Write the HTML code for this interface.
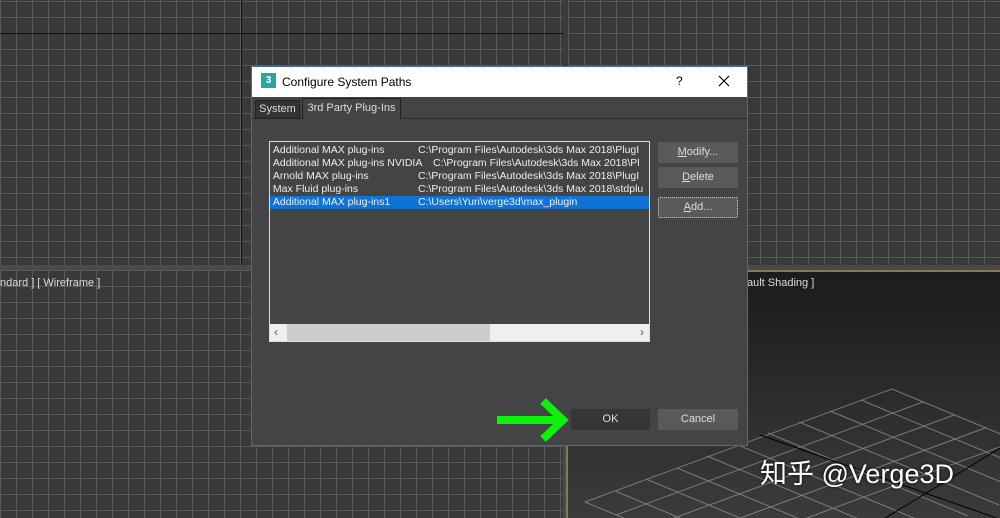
<!DOCTYPE html>
<html><head><meta charset="utf-8"><style>
*{margin:0;padding:0;box-sizing:border-box}
html,body{width:1000px;height:518px;overflow:hidden}
body{background:#3a3a3a;font-family:"Liberation Sans",sans-serif;position:relative}
.grid{position:absolute;background-color:#393939;background-image:linear-gradient(#5a5a5a 1px,transparent 1px),linear-gradient(90deg,#5a5a5a 1px,transparent 1px);background-size:16px 16px}
.abs{position:absolute}
.dlg{position:absolute;left:251px;top:66px;width:497px;height:380px;background:#444;border:1px solid #3f6e9e}
.title{position:absolute;left:0;top:0;right:0;height:30px;background:#fff;color:#000;font-size:12px}
.btn{position:absolute;background:#5a5a5a;color:#ddd;font-size:11px;text-align:center;line-height:21px;height:21px;border-radius:2px}
.row{height:13px;line-height:13px;font-size:10.5px;color:#eee;white-space:nowrap;position:relative}
.row span{position:absolute;left:148px}
</style></head><body>
<div class="grid" style="left:0;top:0;width:563px;height:265px;background-position:0 1px"></div>
<div class="grid" style="left:568px;top:0;width:432px;height:265px;background-position:0 1px"></div>
<div class="abs" style="left:0;top:33px;width:563px;height:1px;background:#111"></div>
<div class="abs" style="left:241px;top:0;width:1px;height:265px;background:#111"></div>
<div class="abs" style="left:0;top:265px;width:1000px;height:5px;background:#4a4a4a"></div>
<div class="grid" style="left:0;top:270px;width:563px;height:248px"></div>
<div class="abs" style="left:563px;top:265px;width:5px;height:253px;background:#4a4a4a"></div>
<div class="abs" style="left:566px;top:270px;width:434px;height:248px;background:linear-gradient(#1c1c1c,#3b3b3b);border-top:2px solid #8a7a45;border-left:2px solid #8a7a45;overflow:hidden">
<svg class="abs" style="left:-566px;top:-270px" width="1000" height="518">
<g stroke="#999" stroke-width="1" opacity=".7">
<line x1="890" y1="387" x2="583" y2="500"/><line x1="921" y1="400" x2="614" y2="513"/><line x1="952" y1="413" x2="645" y2="526"/><line x1="983" y1="426" x2="676" y2="539"/><line x1="1014" y1="439" x2="707" y2="552"/>
<line x1="890" y1="387" x2="1090" y2="470"/><line x1="859" y1="398" x2="1059" y2="481"/><line x1="828" y1="409" x2="1028" y2="492"/><line x1="797" y1="420" x2="997" y2="503"/><line x1="766" y1="431" x2="966" y2="514"/><line x1="736" y1="443" x2="936" y2="526"/><line x1="705" y1="454" x2="905" y2="537"/><line x1="675" y1="466" x2="875" y2="549"/><line x1="644" y1="477" x2="844" y2="560"/><line x1="613" y1="489" x2="813" y2="572"/><line x1="583" y1="500" x2="783" y2="583"/>
</g>
<line x1="758" y1="433" x2="1000" y2="518" stroke="#000"/>
<line x1="1000" y1="445" x2="880" y2="518" stroke="#000"/>
</svg>
</div>
<div class="abs" style="left:0;top:277px;font-size:11px;color:#ddd">ndard ] [ Wireframe ]</div>
<div class="abs" style="left:747px;top:277px;font-size:11px;color:#ddd">ault Shading ]</div>
<div class="abs" style="left:760px;top:452px;font-size:27px;color:#fff;font-family:'Liberation Sans','Noto Sans CJK SC',sans-serif;text-shadow:0 0 3px #000;white-space:nowrap">知乎 @Verge3D</div>

<div class="dlg">
<div class="title">
<div class="abs" style="left:9px;top:6px;width:15px;height:15px;background:#2aa5a0;color:#fff;font-size:10px;font-weight:bold;text-align:center;line-height:15px">3</div>
<div class="abs" style="left:30px;top:8px">Configure System Paths</div>
<div class="abs" style="left:424px;top:7px">?</div>
<svg class="abs" style="left:466px;top:8px" width="12" height="12"><path d="M1 1L11 11M11 1L1 11" stroke="#000" stroke-width="1.2"/></svg>
</div>
<div class="abs" style="left:0;top:51px;right:0;height:1px;background:#2a2a2a"></div>
<div class="abs" style="left:3px;top:33px;width:45px;height:19px;background:#333;border:1px solid #222;color:#ddd;font-size:11px;line-height:17px;text-align:center">System</div>
<div class="abs" style="left:50px;top:31px;width:99px;height:21px;background:#444;border:1px solid #222;border-bottom:none;color:#ddd;font-size:11px;line-height:19px;text-align:center">3rd Party Plug-Ins</div>
<div class="abs" style="left:17px;top:74px;width:381px;height:201px;background:#444;border:1px solid #ddd;overflow:hidden">
<div style="padding-top:2px">
<div class="row">&nbsp;Additional MAX plug-ins<span>C:\Program Files\Autodesk\3ds Max 2018\PlugI</span></div>
<div class="row">&nbsp;Additional MAX plug-ins NVIDIA<span style="left:163px">C:\Program Files\Autodesk\3ds Max 2018\Pl</span></div>
<div class="row">&nbsp;Arnold MAX plug-ins<span>C:\Program Files\Autodesk\3ds Max 2018\PlugI</span></div>
<div class="row">&nbsp;Max Fluid plug-ins<span>C:\Program Files\Autodesk\3ds Max 2018\stdplu</span></div>
<div class="row" style="background:#0f73d6">&nbsp;Additional MAX plug-ins1<span>C:\Users\Yuri\verge3d\max_plugin</span></div>
</div>
<div class="abs" style="left:0;bottom:0;width:100%;height:17px;background:#efefef">
<div class="abs" style="left:17px;top:0;width:203px;height:17px;background:#cdcdcd"></div>
<div class="abs" style="left:4px;top:1px;font-size:12px;color:#555">‹</div>
<div class="abs" style="right:5px;top:1px;font-size:12px;color:#555">›</div>
</div>
</div>
<div class="btn" style="left:406px;top:75px;width:80px"><u>M</u>odify...</div>
<div class="btn" style="left:406px;top:100px;width:80px"><u>D</u>elete</div>
<div class="btn" style="left:406px;top:130px;width:80px;border:1px dotted #ccc;line-height:19px"><u>A</u>dd...</div>
<div class="btn" style="left:319px;top:342px;width:79px;background:#363636">OK</div>
<div class="btn" style="left:406px;top:342px;width:80px">Cancel</div>
</div>
<svg class="abs" style="left:495px;top:396px" width="80" height="48"><path d="M2 24H66M48 5L68 24L48 43" stroke="#0cf20c" stroke-width="8" fill="none"/></svg>
</body></html>
